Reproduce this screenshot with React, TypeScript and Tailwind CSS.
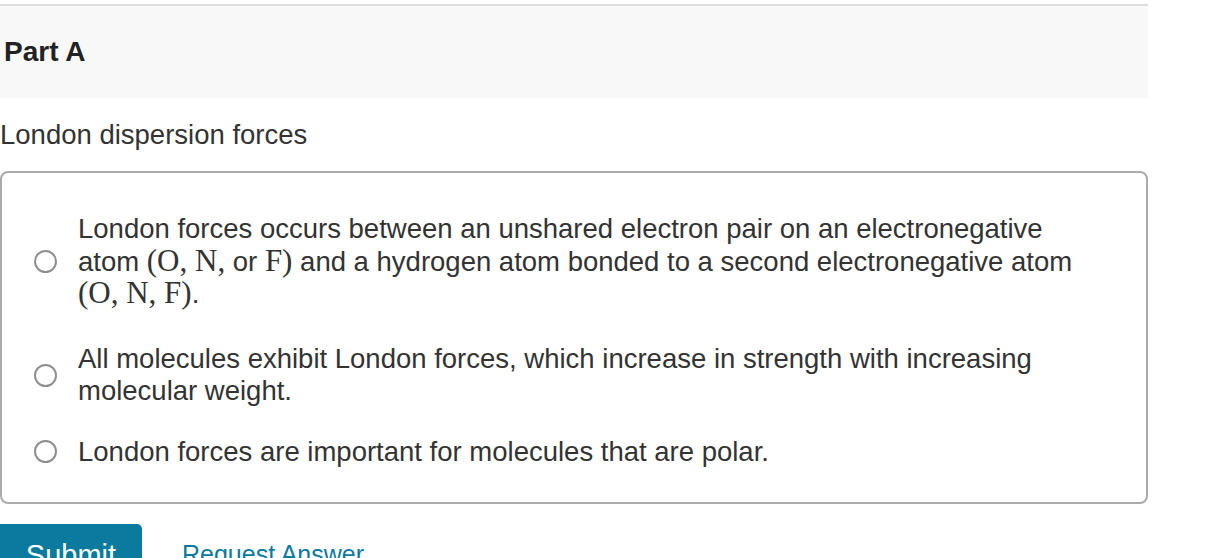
import React from "react";

const M = ({ children }: { children: React.ReactNode }) => (
  <span className="font-['Liberation_Serif',serif] text-[31px] leading-[20px]">{children}</span>
);

type OptionProps = {
  children: React.ReactNode;
  className?: string;
};

function Option({ children, className = "" }: OptionProps) {
  return (
    <label className={`flex items-center ${className}`}>
      <span className="ml-[32px] h-[23px] w-[23px] shrink-0 rounded-full border-2 border-[#8e8e8e] bg-white" />
      <span className="ml-[21px] pr-[40px] leading-[32.5px]">{children}</span>
    </label>
  );
}

export default function App() {
  return (
    <div className="min-h-[558px] w-[1230px] overflow-hidden bg-white font-['Liberation_Sans',Arial,sans-serif] text-[27.5px] text-[#333]">
      <div className="w-[1148px] pt-[4px]">
        <div className="border-t-2 border-[#dddddd]" />
        <div className="flex h-[92px] items-center bg-[#f8f8f8] pl-[4px]">
          <h2 className="text-[28px] font-semibold text-[#222]">Part A</h2>
        </div>

        <p className="mt-[20px] leading-[33px]">London dispersion forces</p>

        <div className="mt-[20px] rounded-[8px] border-2 border-[#aaaaaa] pb-[34px] pt-[40px]">
          <Option>
            London forces occurs between an unshared electron pair on an electronegative atom{" "}
            <M>(O, N,</M> or <M>F)</M> and a hydrogen atom bonded to a second electronegative atom{" "}
            <M>(O, N, F)</M>.
          </Option>
          <Option className="mt-[32px]">
            All molecules exhibit London forces, which increase in strength with increasing
            molecular weight.
          </Option>
          <Option className="mt-[28px]">
            London forces are important for molecules that are polar.
          </Option>
        </div>

        <div className="mt-[20px] flex items-start">
          <button className="h-[60px] w-[142px] rounded-r-[5px] bg-[#0a7b9e] text-[29px] text-white">
            <span className="block pt-[4px]">Submit</span>
          </button>
          <a className="ml-[40px] mt-[12px] text-[25px] font-medium text-[#0b79a1]" href="#">
            Request Answer
          </a>
        </div>
      </div>
    </div>
  );
}
